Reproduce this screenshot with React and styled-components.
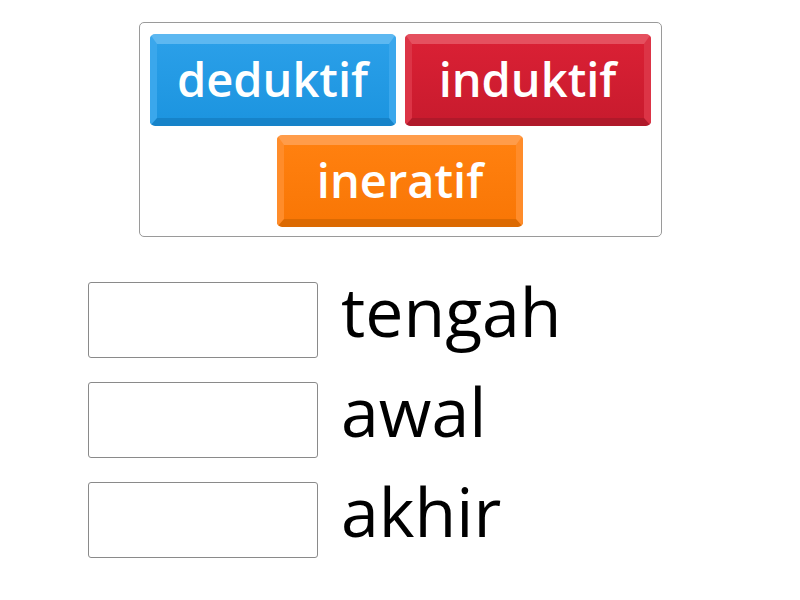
import styled, { createGlobalStyle } from 'styled-components';

const GlobalStyle = createGlobalStyle`
  html, body {
    margin: 0;
    padding: 0;
    background: #fff;
    font-family: "Open Sans", "Liberation Sans", sans-serif;
  }
`;

const palette = {
  blue: { top: '#5db8f1', side: '#3aa7ec', face: '#2a9fe8', faceEnd: '#1d95e0', bottom: '#1683c9' },
  red: { top: '#e5505f', side: '#dc3446', face: '#d92034', faceEnd: '#c91b2e', bottom: '#b0192a' },
  orange: { top: '#ff9c4a', side: '#ff8c2a', face: '#ff800f', faceEnd: '#f97706', bottom: '#dc6a02' },
};

const Page = styled.div`
  width: 800px;
  height: 600px;
  padding-top: 22px;
  box-sizing: border-box;
`;

const Bank = styled.div`
  width: 523px;
  margin: 0 auto;
  box-sizing: border-box;
  border: 1px solid #9a9a9a;
  border-radius: 5px;
  padding: 11px 10px 9px 10px;
  display: flex;
  flex-wrap: wrap;
  justify-content: center;
  gap: 9px;
`;

const Tile = styled.div`
  width: 246px;
  height: 92px;
  box-sizing: border-box;
  border-radius: 5px;
  border-style: solid;
  border-width: 10px 7px 8px 7px;
  border-color: ${(p) => palette[p.$c].top} ${(p) => palette[p.$c].side}
    ${(p) => palette[p.$c].bottom} ${(p) => palette[p.$c].side};
  background: linear-gradient(${(p) => palette[p.$c].face}, ${(p) => palette[p.$c].faceEnd});
  display: flex;
  align-items: center;
  justify-content: center;
  color: #fff;
  font-weight: 600;
  font-size: 47px;
  line-height: 1;
  padding-bottom: 4px;
`;

const Targets = styled.div`
  margin: 45px 0 0 88px;
  display: flex;
  flex-direction: column;
  gap: 24px;
`;

const Row = styled.div`
  display: flex;
  align-items: flex-start;
  gap: 23px;
`;

const Slot = styled.div`
  width: 230px;
  height: 76px;
  box-sizing: border-box;
  border: 1px solid #8a8a8a;
  border-radius: 3px;
`;

const Label = styled.div`
  font-size: 68px;
  line-height: 68px;
  margin-top: -5px;
  color: #000;
`;

const tiles = [
  { text: 'deduktif', c: 'blue' },
  { text: 'induktif', c: 'red' },
  { text: 'ineratif', c: 'orange' },
];

const rows = ['tengah', 'awal', 'akhir'];

export default function App() {
  return (
    <Page>
      <GlobalStyle />
      <Bank>
        {tiles.map((t) => (
          <Tile key={t.text} $c={t.c}>{t.text}</Tile>
        ))}
      </Bank>
      <Targets>
        {rows.map((r) => (
          <Row key={r}>
            <Slot />
            <Label>{r}</Label>
          </Row>
        ))}
      </Targets>
    </Page>
  );
}
